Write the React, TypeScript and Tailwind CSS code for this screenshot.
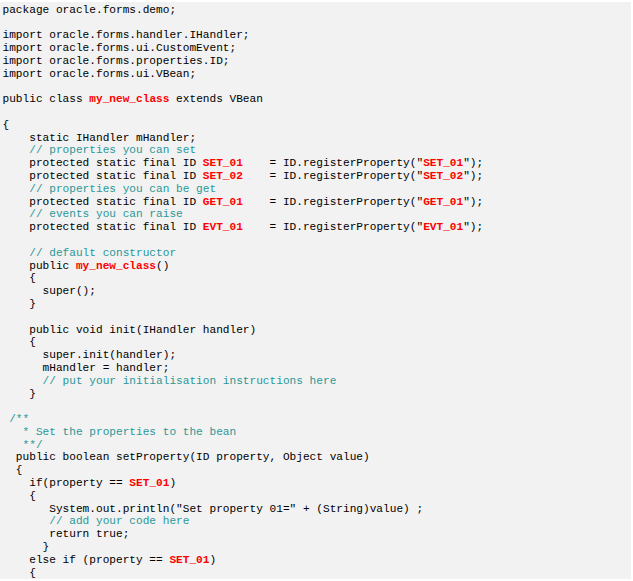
import React from "react";

type Seg = [string, "t" | "r" | "c"];
type Line = Seg[];

const T = (s: string): Seg => [s, "t"];
const R = (s: string): Seg => [s, "r"];
const C = (s: string): Seg => [s, "c"];

const lines: Line[] = [
  [T("package oracle.forms.demo;")],
  [],
  [T("import oracle.forms.handler.IHandler;")],
  [T("import oracle.forms.ui.CustomEvent;")],
  [T("import oracle.forms.properties.ID;")],
  [T("import oracle.forms.ui.VBean;")],
  [],
  [T("public class "), R("my_new_class"), T(" extends VBean")],
  [],
  [T("{")],
  [T("    static IHandler mHandler;")],
  [C("    // properties you can set")],
  [T("    protected static final ID "), R("SET_01"), T("    = ID.registerProperty(\""), R("SET_01"), T("\");")],
  [T("    protected static final ID "), R("SET_02"), T("    = ID.registerProperty(\""), R("SET_02"), T("\");")],
  [C("    // properties you can be get")],
  [T("    protected static final ID "), R("GET_01"), T("    = ID.registerProperty(\""), R("GET_01"), T("\");")],
  [C("    // events you can raise")],
  [T("    protected static final ID "), R("EVT_01"), T("    = ID.registerProperty(\""), R("EVT_01"), T("\");")],
  [],
  [C("    // default constructor")],
  [T("    public "), R("my_new_class"), T("()")],
  [T("    {")],
  [T("      super();")],
  [T("    }")],
  [],
  [T("    public void init(IHandler handler)")],
  [T("    {")],
  [T("      super.init(handler);")],
  [T("      mHandler = handler;")],
  [C("      // put your initialisation instructions here")],
  [T("    }")],
  [],
  [C(" /**")],
  [C("   * Set the properties to the bean")],
  [C("   **/")],
  [T("  public boolean setProperty(ID property, Object value)")],
  [T("  {")],
  [T("    if(property == "), R("SET_01"), T(")")],
  [T("    {")],
  [T("       System.out.println(\"Set property 01=\" + (String)value) ;")],
  [C("       // add your code here")],
  [T("       return true;")],
  [T("      }")],
  [T("    else if (property == "), R("SET_01"), T(")")],
  [T("    {")],
];

function Seg({ seg }: { seg: Seg }) {
  const [text, kind] = seg;
  if (kind === "r") return <span className="font-bold text-[#ff0000]">{text}</span>;
  if (kind === "c") return <span className="text-[#2a9898]">{text}</span>;
  return <span>{text}</span>;
}

export default function App() {
  return (
    <div className="w-[633px] h-[581px] bg-white pt-[2px] overflow-hidden">
      <div
        className="w-[631px] h-[577px] bg-[#f2f2f2] pl-[2.5px] pt-[1.6px] text-[11.13px] leading-[12.8px] text-black"
        style={{ fontFamily: '"Liberation Mono", "Courier New", monospace' }}
      >
        {lines.map((line, i) => (
          <div key={i} className="whitespace-pre h-[12.8px]">
            {line.length === 0 ? " " : line.map((s, j) => <Seg key={j} seg={s} />)}
          </div>
        ))}
      </div>
    </div>
  );
}
